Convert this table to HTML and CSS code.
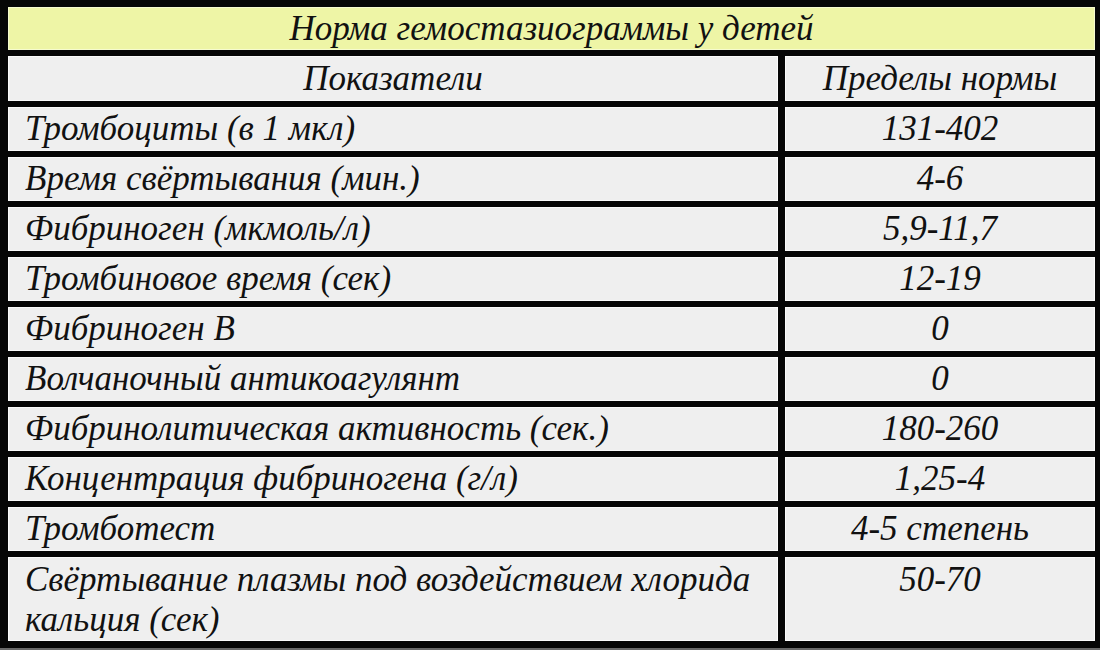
FILE: index.html
```html
<!DOCTYPE html>
<html lang="ru">
<head>
<meta charset="utf-8">
<title>Норма гемостазиограммы у детей</title>
<link rel="stylesheet" href="styles.css">
</head>
<body>
<div class="table">
  <div class="cell title">Норма гемостазиограммы у детей</div>
  <div class="cell head">Показатели</div>
  <div class="cell head">Пределы нормы</div>
  <div class="cell name">Тромбоциты (в 1 мкл)</div>
  <div class="cell val">131-402</div>
  <div class="cell name">Время свёртывания (мин.)</div>
  <div class="cell val">4-6</div>
  <div class="cell name">Фибриноген (мкмоль/л)</div>
  <div class="cell val">5,9-11,7</div>
  <div class="cell name">Тромбиновое время (сек)</div>
  <div class="cell val">12-19</div>
  <div class="cell name">Фибриноген В</div>
  <div class="cell val">0</div>
  <div class="cell name">Волчаночный антикоагулянт</div>
  <div class="cell val">0</div>
  <div class="cell name">Фибринолитическая активность (сек.)</div>
  <div class="cell val">180-260</div>
  <div class="cell name">Концентрация фибриногена (г/л)</div>
  <div class="cell val">1,25-4</div>
  <div class="cell name">Тромботест</div>
  <div class="cell val">4-5 степень</div>
  <div class="cell name last">Свёртывание плазмы под воздействием хлорида кальция (сек)</div>
  <div class="cell val last">50-70</div>
</div>
</body>
</html>
```
FILE: styles.css
```css
html, body {
  margin: 0;
  padding: 0;
}
body {
  width: 1100px;
  height: 650px;
  background: #6a6a6a;
  overflow: hidden;
}
.table {
  box-sizing: border-box;
  width: 1100px;
  height: 648px;
  background: #060606;
  padding: 7px 5px 7px 8px;
  display: grid;
  grid-template-columns: 770px 310px;
  grid-template-rows: 43px 45px repeat(9, 44px) 84px;
  column-gap: 7px;
  row-gap: 6px;
  font-family: "Liberation Serif", "Times New Roman", serif;
  font-style: italic;
  font-size: 35px;
  color: #111;
}
.cell {
  box-sizing: border-box;
  background: #efefef;
  border: 1px solid #fbfbfb;
  display: flex;
  align-items: center;
  white-space: nowrap;
}
.title {
  grid-column: 1 / 3;
  background: #eef5a6;
  border-color: #f6fbcf;
  justify-content: center;
}
.head, .val {
  justify-content: center;
}
.name {
  padding-left: 16px;
}
.last {
  align-items: flex-start;
  white-space: normal;
  line-height: 40px;
  padding-top: 2px;
}
.name.last {
  padding-right: 10px;
}
```
